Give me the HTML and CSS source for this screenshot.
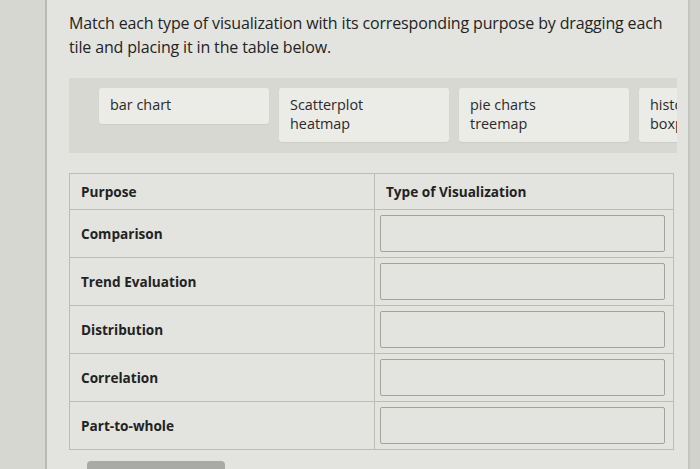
FILE: index.html
```html
<!DOCTYPE html>
<html>
<head>
<meta charset="utf-8">
<link rel="stylesheet" href="styles.css">
</head>
<body>
<div class="screen">
  <div class="side"></div>
  <main class="card">
    <p class="prompt">Match each type of visualization with its corresponding purpose by dragging each tile and placing it in the table below.</p>
    <div class="bank">
      <div class="tile">bar chart</div>
      <div class="tile">Scatterplot<br>heatmap</div>
      <div class="tile">pie charts<br>treemap</div>
      <div class="tile">histogram<br>boxplot</div>
    </div>
    <table class="match">
      <tr class="head"><th>Purpose</th><th>Type of Visualization</th></tr>
      <tr><td>Comparison</td><td class="slot"><div class="drop"></div></td></tr>
      <tr><td>Trend Evaluation</td><td class="slot"><div class="drop"></div></td></tr>
      <tr><td>Distribution</td><td class="slot"><div class="drop"></div></td></tr>
      <tr><td>Correlation</td><td class="slot"><div class="drop"></div></td></tr>
      <tr><td>Part-to-whole</td><td class="slot"><div class="drop"></div></td></tr>
    </table>
    <div class="btn"></div>
  </main>
  <div class="edge"></div>
</div>
</body>
</html>
```

FILE: styles.css
```css
html, body {
  margin: 0;
  padding: 0;
  background: #dcdcd7;
  font-family: "Open Sans", "Liberation Sans", sans-serif;
  color: #262626;
}
.screen {
  display: flex;
  width: 700px;
  height: 469px;
  overflow: hidden;
}
.side {
  width: 45px;
  flex: none;
  background: #d7d7d2;
  border-right: 2px solid #b9b9b4;
}
.card {
  width: 619px;
  flex: none;
  background: #e3e3df;
  padding: 11px 0 0 22px;
  border-right: 2px solid #c4c4bf;
  overflow: hidden;
}
.edge {
  flex: 1;
  background: #d2d2cd;
}
.prompt {
  margin: 0;
  width: 600px;
  font-size: 16px;
  line-height: 24px;
  letter-spacing: -0.15px;
  color: #242424;
}
.bank {
  margin-top: 19px;
  width: 608px;
  height: 75px;
  background: #d8d8d3;
  padding: 10px 0 0 30px;
  box-sizing: border-box;
  display: flex;
  align-items: flex-start;
  gap: 10px;
  overflow: hidden;
}
.tile {
  flex: none;
  width: 170px;
  box-sizing: border-box;
  background: #ebebe8;
  border-radius: 3px;
  padding: 7px 10px 9px 11px;
  font-size: 14.4px;
  line-height: 19px;
  color: #2a2a2a;
  box-shadow: 0 1px 1px rgba(0,0,0,0.06);
}
.tile:first-child {
  padding-bottom: 10px;
}
.match {
  margin-top: 20px;
  width: 605px;
  border-collapse: collapse;
  font-size: 13.6px;
  font-weight: 700;
  color: #222;
}
.match th, .match td {
  border: 1px solid #bdbdb8;
  text-align: left;
  vertical-align: middle;
  padding: 0 11px;
}
.match th:first-child, .match td:first-child {
  width: 282px;
}
.head th {
  height: 35px;
  font-weight: 700;
}
.match td {
  height: 47px;
}
.match td.slot {
  height: 37px;
  padding: 5px 8px 5px 5px;
}
.drop {
  height: 35px;
  border: 1px solid #a3a39e;
  border-radius: 2px;
  background: #e3e3df;
}
.btn {
  margin: 11px 0 0 18px;
  width: 138px;
  height: 30px;
  border-radius: 4px;
  background: #a9aaa6;
}
```
